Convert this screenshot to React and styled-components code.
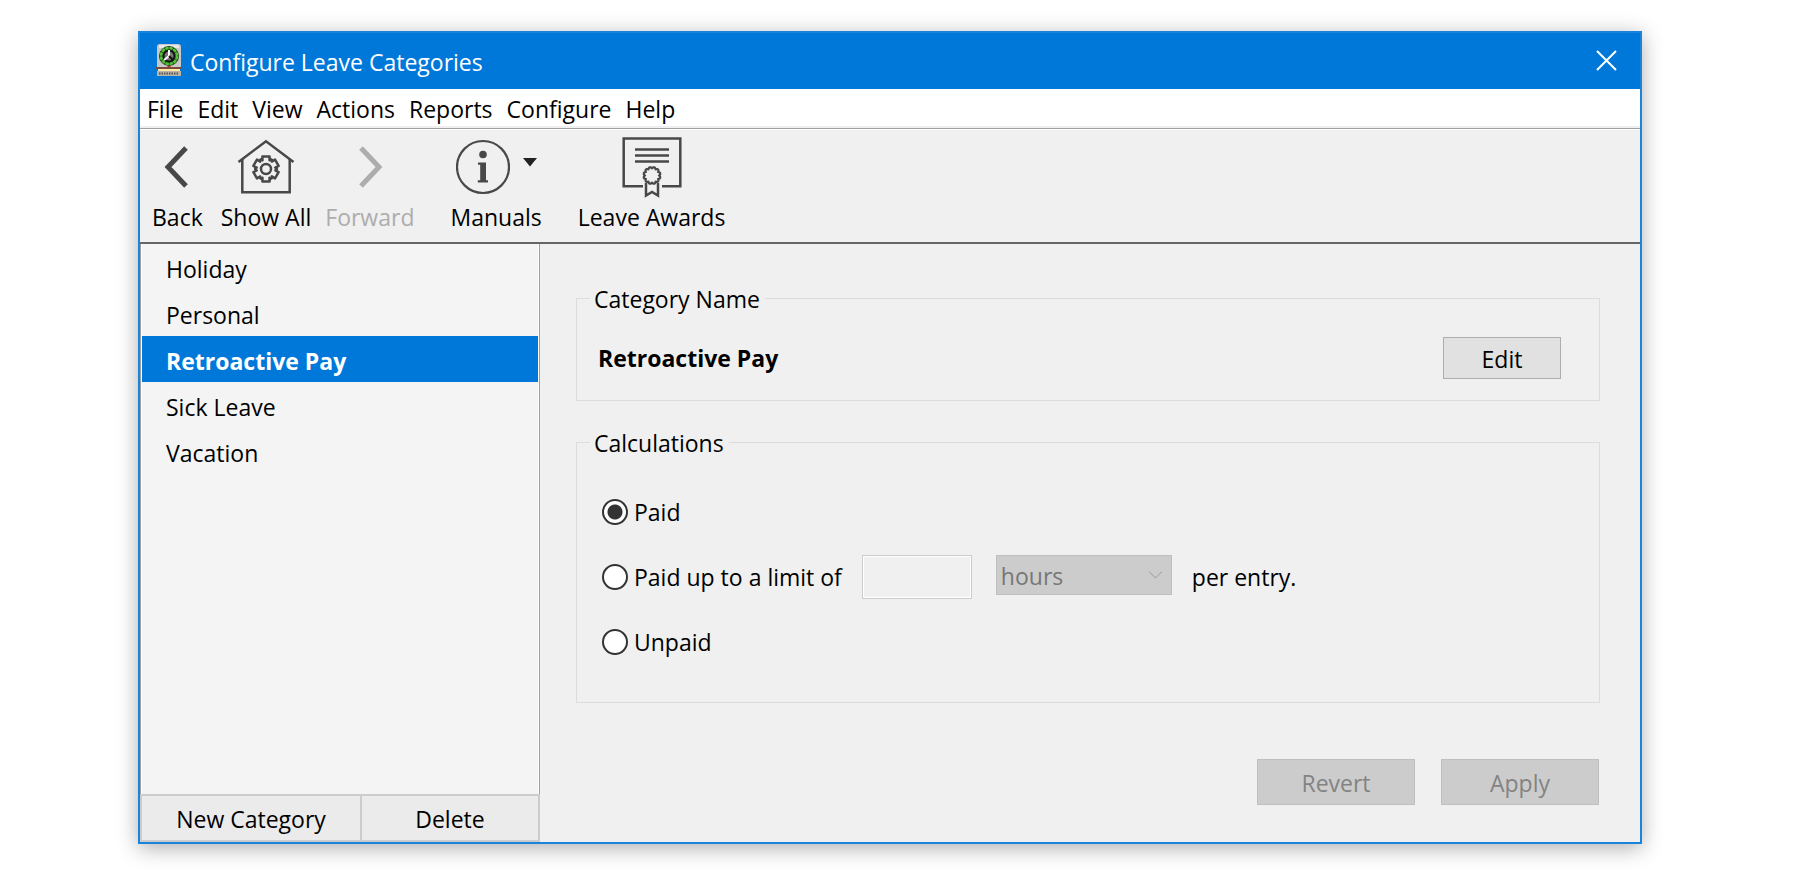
import React, { useState } from 'react'
import styled, { createGlobalStyle } from 'styled-components'

const colors = {
  primary: '#0078da',
  frame: '#1a84dc',
  surface: '#f0f0f0',
  list: '#f4f4f4',
  line: '#a0a0a0',
  groupLine: '#dcdcdc',
  icon: '#484848',
  iconDisabled: '#adadad',
  disabled: '#cccccc',
  disabledLine: '#bfbfbf',
  disabledText: '#838383',
}

const GlobalStyle = createGlobalStyle`
  * {
    box-sizing: border-box;
  }
  body {
    margin: 0;
    background: #fff;
  }
  body, button, input, select {
    font-family: 'Open Sans', 'Noto Sans', sans-serif;
    font-size: 23px;
    line-height: 32px;
    color: #000;
  }
`

const Desktop = styled.div`
  display: flex;
  min-height: 100vh;
  padding: 31px 168px 46px 138px;
`

const Window = styled.div`
  flex: 1;
  display: flex;
  flex-direction: column;
  min-width: 0;
  border: 2px solid ${colors.frame};
  background: ${colors.surface};
  box-shadow: 0 4px 20px rgba(0, 0, 0, 0.32);
`

const TitleBar = styled.header`
  display: flex;
  align-items: center;
  height: 56px;
  padding: 0 23px 2px 16px;
  background: ${colors.primary};
`

const Title = styled.h1`
  flex: 1;
  margin: 3px 0 0 8px;
  font-size: 23px;
  font-weight: 400;
  color: #fff;
`

const PlainButton = styled.button`
  padding: 0;
  border: 0;
  background: none;
`

const CloseButton = styled(PlainButton)`
  display: flex;
`

const MenuBar = styled.nav`
  display: flex;
  gap: 14px;
  height: 37px;
  padding: 3px 7px 0;
  background: #fff;
`

const Toolbar = styled.div`
  display: flex;
  align-items: flex-start;
  height: 116px;
  padding: 10px 12px 0;
  margin-top: 2px;
  border-top: 1px solid ${colors.line};
  border-bottom: 2px solid #666;
  box-shadow: inset 0 1px #fff;
`

const ToolButton = styled(PlainButton)`
  display: flex;
  flex-direction: column;
  align-items: center;
  margin-right: ${({ $space }) => $space}px;
  white-space: nowrap;
  &:disabled {
    color: ${colors.iconDisabled};
  }
`

const ToolIcon = styled.span`
  display: flex;
  gap: 13px;
  height: 62px;
`

const Body = styled.div`
  flex: 1;
  display: flex;
`

const Sidebar = styled.aside`
  display: flex;
  flex-direction: column;
  width: 400px;
`

const List = styled.ul`
  flex: 1;
  margin: 0;
  padding: 0 1px;
  list-style: none;
  background: ${colors.list};
  border: 1px solid ${colors.line};
  border-width: 0 1px;
  box-shadow: inset 1px 0 #fff, inset -1px 0 #fff;
`

const ListItem = styled(PlainButton)`
  display: block;
  width: 100%;
  height: 46px;
  padding: 3px 24px 0;
  text-align: left;
  font-weight: ${({ $active }) => ($active ? 700 : 400)};
  color: ${({ $active }) => ($active ? '#fff' : '#000')};
  background: ${({ $active }) => ($active ? colors.primary : 'none')};
`

const ListActions = styled.div`
  display: grid;
  grid-template-columns: 218fr 176fr;
  gap: 2px;
  height: 48px;
  padding: 2px;
  background: ${colors.disabled};
`

const ListAction = styled(PlainButton)`
  background: #ebebeb;
  padding-top: 2px;
`

const Main = styled.main`
  flex: 1;
  display: flex;
  flex-direction: column;
  gap: 25px;
  padding: 38px 40px 37px 36px;
`

const Group = styled.fieldset`
  min-width: 0;
  margin: 0;
  padding: 0;
  border: 1px solid ${colors.groupLine};
`

const Legend = styled.legend`
  margin-left: 13px;
  padding: 2px 5px 0 4px;
  height: 32px;
  line-height: 30px;
`

const NameRow = styled.div`
  display: flex;
  align-items: center;
  justify-content: space-between;
  padding: 23px 38px 21px 21px;
`

const Options = styled.div`
  display: flex;
  flex-direction: column;
  gap: 21px;
  padding: 32px 25px 38px;
`

const OptionRow = styled.div`
  display: flex;
  align-items: center;
  height: 44px;
`

const RadioLabel = styled.label`
  display: flex;
  align-items: center;
  gap: 6px;
  white-space: nowrap;
`

const Radio = styled.input.attrs({ type: 'radio' })`
  appearance: none;
  width: 26px;
  height: 26px;
  margin: 0;
  border: 2px solid #333;
  border-radius: 50%;
  background: #fff;
  &:checked {
    background: radial-gradient(circle, #333 7px, #fff 8px);
  }
`

const LimitInput = styled.input`
  width: 110px;
  height: 44px;
  margin-left: 20px;
  padding: 0 6px;
  border: 1px solid ${colors.disabled};
  background: ${colors.surface};
  box-shadow: inset 0 0 0 1px #fff;
`

const SelectBox = styled.div`
  display: grid;
  align-items: center;
  align-self: flex-start;
  width: 176px;
  height: 40px;
  margin: 0 20px 0 24px;
  svg {
    grid-area: 1 / 1;
    justify-self: end;
    margin-right: 10px;
    pointer-events: none;
  }
`

const Select = styled.select`
  grid-area: 1 / 1;
  appearance: none;
  height: 40px;
  padding: 2px 4px 0;
  border: 1px solid ${colors.disabledLine};
  border-radius: 0;
  background: ${colors.disabled};
  &:disabled {
    color: #777;
    opacity: 1;
  }
`

const Button = styled.button`
  width: ${({ $wide }) => ($wide ? 158 : 118)}px;
  height: ${({ $wide }) => ($wide ? 46 : 42)}px;
  padding: 2px 0 0;
  border: 1px solid #adadad;
  background: #e1e1e1;
  &:disabled {
    border-color: ${colors.disabledLine};
    background: ${colors.disabled};
    color: ${colors.disabledText};
  }
`

const Footer = styled.div`
  display: flex;
  justify-content: flex-end;
  gap: 26px;
  margin-top: auto;
  padding-right: 1px;
`

// outline of a closed shape given as [radius, degrees] pairs
const polar = points =>
  points
    .map(([r, deg], i) => {
      const a = (deg * Math.PI) / 180
      return `${i ? 'L' : 'M'}${(r * Math.sin(a)).toFixed(2)} ${(-r * Math.cos(a)).toFixed(2)}`
    })
    .join('') + 'Z'

const gear = polar(
  [0, 60, 120, 180, 240, 300].flatMap(d => [
    [10.8, d - 27],
    [9.4, d - 22],
    [13, d - 16],
    [13, d + 16],
    [9.4, d + 22],
    [10.8, d + 27],
  ])
)

const rosette = polar(
  Array.from({ length: 72 }, (_, i) => [7.2 + 1.3 * Math.abs(Math.sin((i * Math.PI) / 6)), i * 5])
)

const AppIcon = () => (
  <svg width="26" height="32" viewBox="0 0 26 32">
    <rect x="1" y="0" width="24" height="25" rx="3" fill="#c9c9c9" />
    <rect x="3" y="1" width="20" height="3" fill="#e8e8e8" />
    <circle cx="13" cy="12" r="10" fill="#1c2a1a" />
    <circle cx="13" cy="12" r="8" fill="none" stroke="#4fc435" strokeWidth="2.600" strokeDasharray="3.600 0.600" />
    <circle cx="13" cy="12" r="6" fill="#111" />
    <circle cx="13" cy="12" r="4.500" fill="#777" />
    <path d="M13 6v6l-5 4" fill="none" stroke="#fff" strokeWidth="2" />
    <path d="M13 12l4 4" stroke="#111" strokeWidth="2" />
    <path d="M11 22h4l-2 3z" fill="#d62f2f" />
    <rect x="0" y="23" width="26" height="2" fill="#7a4a3a" />
    <rect x="2" y="25" width="22" height="2" fill="#ffe9a0" />
    <rect x="1" y="27" width="24" height="5" fill="#b9b4a8" />
    <path d="M3 29.500h20" stroke="#555" strokeWidth="2" strokeDasharray="1.500 1" />
  </svg>
)

const CloseIcon = () => (
  <svg width="21" height="21" viewBox="0 0 21 21" stroke="#fff" strokeWidth="2">
    <path d="M1 1l19 19M20 1L1 20" />
  </svg>
)

const BackIcon = () => (
  <svg width="26" height="56" viewBox="0 0 26 56" fill="none" stroke={colors.icon} strokeWidth="5">
    <path d="M22 9L4 28l18 19" />
  </svg>
)

const ForwardIcon = () => (
  <svg width="26" height="56" viewBox="0 0 26 56" fill="none" stroke={colors.iconDisabled} strokeWidth="5">
    <path d="M4 9l18 19L4 47" />
  </svg>
)

const HomeIcon = () => (
  <svg width="58" height="60" viewBox="0 0 58 60" fill="none" stroke={colors.icon} strokeWidth="2.500">
    <path d="M1.500 23L29 2.200 56.500 23" />
    <path d="M5.300 20v33.200h47.400V20" />
    <g transform="translate(29 30)" strokeLinejoin="round">
      <path d={gear} />
      <circle r="5" />
    </g>
  </svg>
)

const InfoIcon = () => (
  <svg width="54" height="60" viewBox="0 0 54 60">
    <circle cx="27" cy="28" r="26" fill="none" stroke={colors.icon} strokeWidth="2.200" />
    <circle cx="27" cy="15.500" r="3.800" fill={colors.icon} />
    <path d="M22 23.500h8v17.700h2v2.300H21.800v-2.300h2.400V25.800H22z" fill={colors.icon} />
  </svg>
)

const CaretIcon = () => (
  <svg width="14" height="60" viewBox="0 0 14 60">
    <path d="M0 19h14l-7 8.500z" fill="#222" />
  </svg>
)

const CertificateIcon = () => (
  <svg width="60" height="60" viewBox="0 0 60 60" fill="none" stroke={colors.icon} strokeWidth="2.500">
    <path d="M21 47.300H1.700V-.5h56.600v47.800H40" />
    <path d="M13 10.500h34M13 16.500h34M13 22.500h34" />
    <path d={rosette} transform="translate(30 36.500)" strokeWidth="2.200" />
    <path d="M24 44v12.500l6-3.500 6 3.500V44" />
  </svg>
)

const ChevronIcon = () => (
  <svg width="13" height="8" viewBox="0 0 13 8" fill="none" stroke="#999">
    <path d="M0 .5l6.500 6.500L13 .5" />
  </svg>
)

const CertificateFrame = styled.span`
  display: flex;
  svg {
    overflow: visible;
  }
`

const menus = ['File', 'Edit', 'View', 'Actions', 'Reports', 'Configure', 'Help']
const categories = ['Holiday', 'Personal', 'Retroactive Pay', 'Sick Leave', 'Vacation']

const App = () => {
  const [category, setCategory] = useState('Retroactive Pay')
  const [calculation, setCalculation] = useState('paid')

  const radioProps = value => ({
    name: 'calculation',
    value,
    checked: calculation === value,
    onChange: () => setCalculation(value),
  })

  return (
    <>
      <GlobalStyle />
      <Desktop>
        <Window>
          <TitleBar>
            <AppIcon />
            <Title>Configure Leave Categories</Title>
            <CloseButton aria-label="Close">
              <CloseIcon />
            </CloseButton>
          </TitleBar>
          <MenuBar>
            {menus.map(menu => (
              <PlainButton key={menu}>{menu}</PlainButton>
            ))}
          </MenuBar>
          <Toolbar>
            <ToolButton $space={18}>
              <ToolIcon><BackIcon /></ToolIcon>
              Back
            </ToolButton>
            <ToolButton $space={14}>
              <ToolIcon><HomeIcon /></ToolIcon>
              Show All
            </ToolButton>
            <ToolButton $space={36} disabled>
              <ToolIcon><ForwardIcon /></ToolIcon>
              Forward
            </ToolButton>
            <ToolButton $space={36}>
              <ToolIcon>
                <InfoIcon />
                <CaretIcon />
              </ToolIcon>
              Manuals
            </ToolButton>
            <ToolButton $space={0}>
              <ToolIcon>
                <CertificateFrame><CertificateIcon /></CertificateFrame>
              </ToolIcon>
              Leave Awards
            </ToolButton>
          </Toolbar>
          <Body>
            <Sidebar>
              <List>
                {categories.map(name => (
                  <li key={name}>
                    <ListItem $active={name === category} onClick={() => setCategory(name)}>
                      {name}
                    </ListItem>
                  </li>
                ))}
              </List>
              <ListActions>
                <ListAction>New Category</ListAction>
                <ListAction>Delete</ListAction>
              </ListActions>
            </Sidebar>
            <Main>
              <Group>
                <Legend>Category Name</Legend>
                <NameRow>
                  <strong>{category}</strong>
                  <Button>Edit</Button>
                </NameRow>
              </Group>
              <Group>
                <Legend>Calculations</Legend>
                <Options>
                  <OptionRow>
                    <RadioLabel>
                      <Radio {...radioProps('paid')} />
                      Paid
                    </RadioLabel>
                  </OptionRow>
                  <OptionRow>
                    <RadioLabel>
                      <Radio {...radioProps('limit')} />
                      Paid up to a limit of
                    </RadioLabel>
                    <LimitInput type="text" aria-label="Limit" disabled={calculation !== 'limit'} />
                    <SelectBox>
                      <Select aria-label="Unit" disabled={calculation !== 'limit'}>
                        <option>hours</option>
                      </Select>
                      <ChevronIcon />
                    </SelectBox>
                    per entry.
                  </OptionRow>
                  <OptionRow>
                    <RadioLabel>
                      <Radio {...radioProps('unpaid')} />
                      Unpaid
                    </RadioLabel>
                  </OptionRow>
                </Options>
              </Group>
              <Footer>
                <Button $wide disabled>Revert</Button>
                <Button $wide disabled>Apply</Button>
              </Footer>
            </Main>
          </Body>
        </Window>
      </Desktop>
    </>
  )
}

export default App
